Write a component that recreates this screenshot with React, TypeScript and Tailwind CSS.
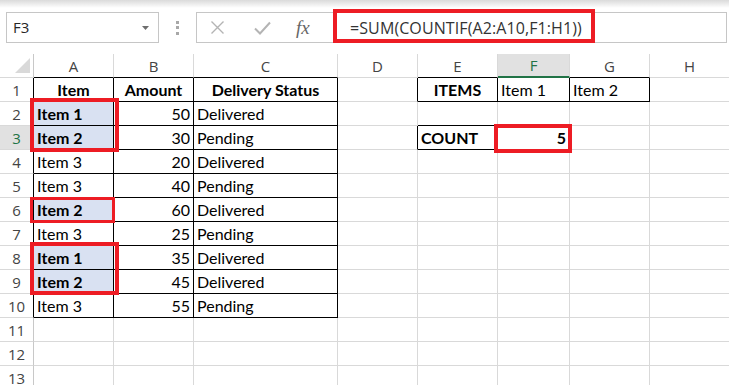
import React from "react";

type Cell = { t: string; b?: boolean; a?: "l" | "c" | "r"; fill?: boolean };

const LETTERS = ["A", "B", "C", "D", "E", "F", "G", "H"];

const data: Record<string, Cell> = {
  "1-0": { t: "Item", b: true, a: "c" },
  "1-1": { t: "Amount", b: true, a: "c" },
  "1-2": { t: "Delivery Status", b: true, a: "c" },
  "1-4": { t: "ITEMS", b: true, a: "c" },
  "1-5": { t: "Item 1" },
  "1-6": { t: "Item 2" },
  "3-4": { t: "COUNT", b: true },
  "3-5": { t: "5", b: true, a: "r" },
};

const rows: [string, number, string, boolean][] = [
  ["Item 1", 50, "Delivered", true],
  ["Item 2", 30, "Pending", true],
  ["Item 3", 20, "Delivered", false],
  ["Item 3", 40, "Pending", false],
  ["Item 2", 60, "Delivered", true],
  ["Item 3", 25, "Pending", false],
  ["Item 1", 35, "Delivered", true],
  ["Item 2", 45, "Delivered", true],
  ["Item 3", 55, "Pending", false],
];
rows.forEach((row, i) => {
  const r = i + 2;
  data[`${r}-0`] = { t: row[0], b: row[3], fill: row[3] };
  data[`${r}-1`] = { t: String(row[1]), a: "r" };
  data[`${r}-2`] = { t: row[2] };
});

const bordered = (r: number, c: number) =>
  (r >= 1 && r <= 10 && c >= 0 && c <= 2) ||
  (r === 1 && c >= 4 && c <= 6) ||
  (r === 3 && (c === 4 || c === 5));

function GridCell({ r, c }: { r: number; c: number }) {
  const d = data[`${r}-${c}`];
  const rb = bordered(r, c) || bordered(r, c + 1);
  const bb = bordered(r, c) || bordered(r + 1, c);
  const align =
    d?.a === "c" ? "justify-center" : d?.a === "r" ? "justify-end pr-[3px]" : "justify-start pl-[3px]";
  return (
    <div
      className={`flex items-end pb-[2px] border-r border-b overflow-visible whitespace-nowrap text-[16px] leading-[18px] text-black font-['Lato',sans-serif] ${
        rb ? "border-r-black" : "border-r-[#d9d9d9]"
      } ${bb ? "border-b-black" : "border-b-[#d9d9d9]"} ${d?.fill ? "bg-[#d9e1f2]" : "bg-white"} ${
        d?.b ? "font-bold" : "font-normal"
      } ${align}`}
    >
      {d?.t ?? ""}
    </div>
  );
}

function RowHeader({ r }: { r: number }) {
  const sel = r === 3;
  return (
    <div
      className={`flex items-end justify-center pb-[2px] border-r border-b border-b-[#d9d9d9] text-[15px] leading-[18px] font-['Open_Sans',sans-serif] ${
        bordered(r, 0) ? "border-r-black" : "border-r-[#c8c8c8]"
      } ${sel ? "bg-[#e1e1e1] text-[#217346]" : "bg-white text-[#444444]"}`}
    >
      {r}
    </div>
  );
}

function ColHeader({ c }: { c: number }) {
  const sel = c === 5;
  return (
    <div
      className={`flex items-center justify-center pt-[1px] border-r border-r-[#d9d9d9] text-[15px] font-['Open_Sans',sans-serif] ${
        sel
          ? "bg-[#e1e1e1] text-[#217346] border-b-2 border-b-[#217346]"
          : bordered(1, c)
          ? "bg-white text-[#444444] border-b border-b-black"
          : "bg-white text-[#444444] border-b border-b-[#d9d9d9]"
      }`}
    >
      {LETTERS[c]}
    </div>
  );
}

export default function App() {
  const rowNums = Array.from({ length: 13 }, (_, i) => i + 1);
  return (
    <div className="w-[729px] h-[385px] overflow-hidden bg-white relative font-['Open_Sans',sans-serif]">
      {/* Formula bar area */}
      <div className="h-[54px] bg-[linear-gradient(to_bottom,#dadada_0px,#ffffff_8px)] pt-[12px] pl-[6px] pr-[2px]">
        <div className="flex h-[31px] items-stretch">
          <div className="w-[153px] border border-[#c6c6c6] bg-white flex items-center justify-between pl-[6px] pr-[9px]">
            <span className="text-[15px] text-[#262626] leading-none">F3</span>
            <svg width="7" height="4" viewBox="0 0 7 4">
              <polygon points="0,0 7,0 3.5,4" fill="#6e6e6e" />
            </svg>
          </div>
          <div className="w-[37px] flex flex-col items-center justify-center gap-[2.5px]">
            <div className="w-[3px] h-[3px] bg-[#a8a8a8]" />
            <div className="w-[3px] h-[3px] bg-[#a8a8a8]" />
            <div className="w-[3px] h-[3px] bg-[#a8a8a8]" />
          </div>
          <div className="flex-1 border border-[#c6c6c6] bg-white flex items-center relative">
            <div className="w-[136px] flex items-center pl-[13px] gap-[29px]">
              <svg width="15" height="15" viewBox="0 0 15 15">
                <path d="M1.5 1.5 L13.5 13.5 M13.5 1.5 L1.5 13.5" stroke="#b4b4b4" strokeWidth="1.4" fill="none" />
              </svg>
              <svg width="17" height="14" viewBox="0 0 17 14">
                <path d="M1 7.5 L6 12.5 L16 1.5" stroke="#b4b4b4" strokeWidth="2" fill="none" />
              </svg>
              <span className="font-['Liberation_Serif',serif] italic text-[19px] text-[#666666] leading-none -ml-[4px]">
                fx
              </span>
            </div>
            <span className="pl-[17px] text-[16px] text-[#333333] leading-none pt-[1px] tracking-[0.1px]">
              =SUM(COUNTIF(A2:A10,F1:H1))
            </span>
            <div className="absolute left-[136px] top-[-4px] w-[262px] h-[34px] border-4 border-[#ed1c24]" />
          </div>
        </div>
      </div>

      {/* Grid */}
      <div className="relative">
        <div className="grid grid-cols-[34px_80px_80px_144px_80px_80px_72px_80px_80px] auto-rows-[24px]">
          <div className="border-r border-r-[#c8c8c8] border-b border-b-[#d9d9d9] bg-white relative">
            <svg className="absolute left-[15px] top-[4px]" width="16" height="16" viewBox="0 0 16 16">
              <polygon points="0,15 15,15 15,0" fill="#d9d9d9" />
            </svg>
          </div>
          {LETTERS.map((_, c) => (
            <ColHeader key={c} c={c} />
          ))}
          {rowNums.map((r) => (
            <React.Fragment key={r}>
              <RowHeader r={r} />
              {LETTERS.map((_, c) => (
                <GridCell key={c} r={r} c={c} />
              ))}
            </React.Fragment>
          ))}
        </div>
        {/* Red highlight boxes */}
        <div className="absolute left-[30px] top-[44px] w-[89px] h-[54px] border-4 border-[#ed1c24]" />
        <div className="absolute left-[30px] top-[143px] w-[85px] h-[26px] border-[3.5px] border-[#ed1c24]" />
        <div className="absolute left-[30px] top-[188px] w-[89px] h-[53px] border-4 border-[#ed1c24]" />
        <div className="absolute left-[494px] top-[70px] w-[78px] h-[29px] border-4 border-[#ed1c24]" />
      </div>
    </div>
  );
}
